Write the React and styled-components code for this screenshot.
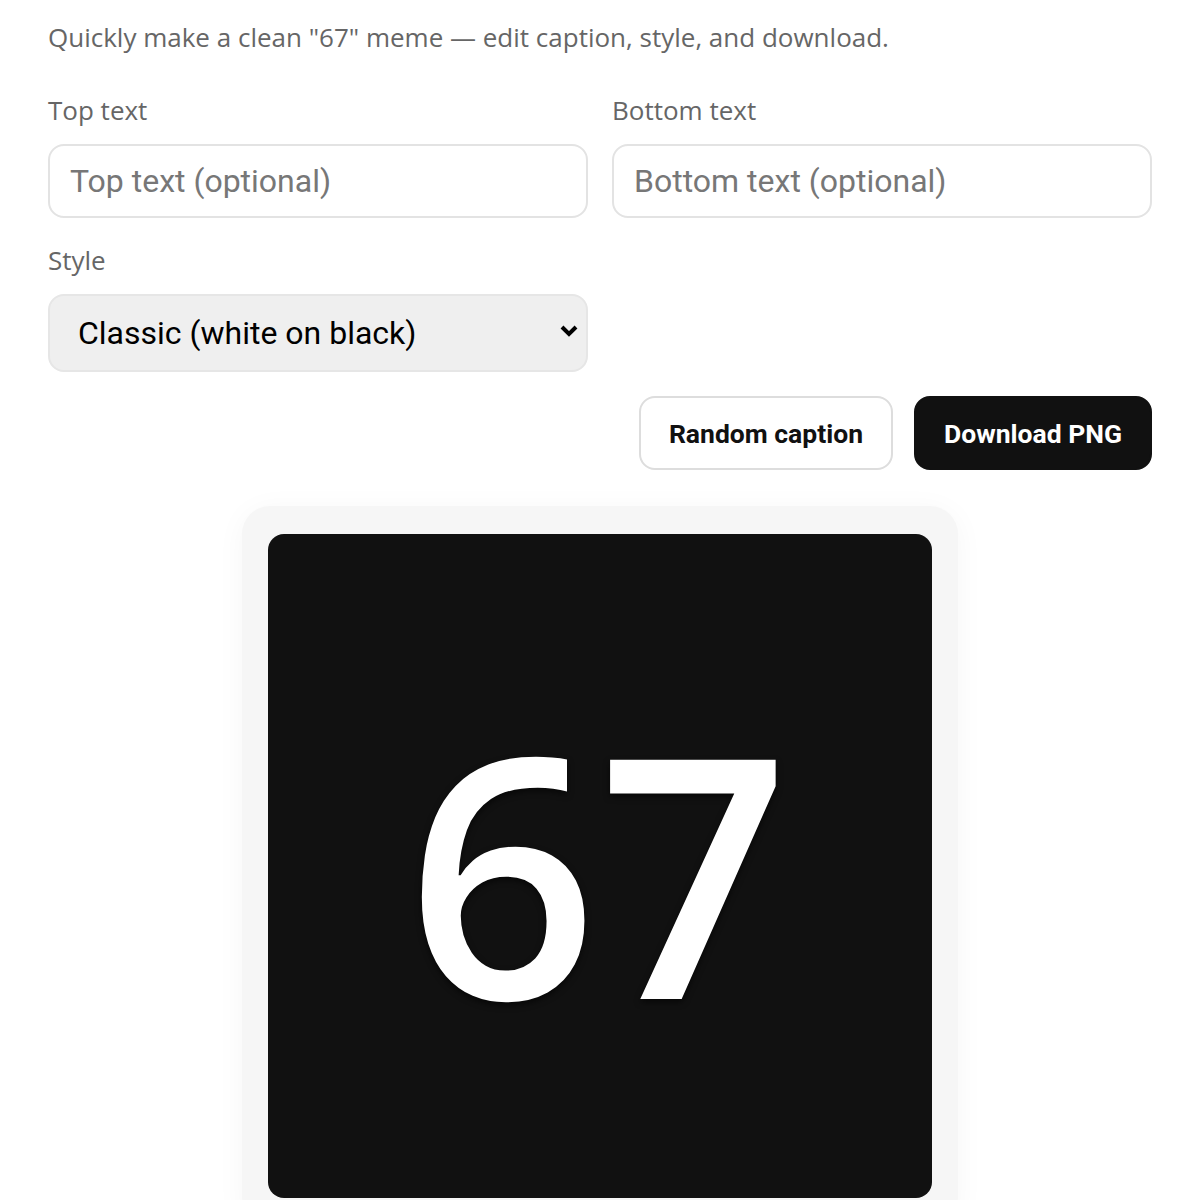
import React, { useState } from 'react';
import styled, { createGlobalStyle } from 'styled-components';

const GlobalStyle = createGlobalStyle`
    html, body {
        margin: 0;
        padding: 0;
        background: #ffffff;
    }
    * {
        box-sizing: border-box;
    }
`;

const Page = styled.div`
    padding: 20px 48px 0 48px;
    font-family: "Open Sans", "Noto Sans", sans-serif;
`;

const Intro = styled.p`
    margin: 0 0 40px 0;
    font-size: 26px;
    line-height: 34px;
    color: #666666;
`;

const FieldGrid = styled.div`
    display: grid;
    grid-template-columns: 1fr 1fr;
    column-gap: 24px;
    row-gap: 26px;
`;

const Field = styled.label`
    display: flex;
    flex-direction: column;
    gap: 18px;
`;

const FieldLabel = styled.span`
    font-size: 26px;
    line-height: 32px;
    color: #666666;
`;

const TextInput = styled.input`
    height: 74px;
    width: 100%;
    border: 2px solid #e3e3e3;
    border-radius: 16px;
    padding: 0 20px;
    font-family: Roboto, "Liberation Sans", sans-serif;
    font-size: 32px;
    color: #111;
    background: #fff;
    outline: none;

    &::placeholder {
        color: #777777;
    }
`;

const SelectWrap = styled.div`
    position: relative;
`;

const StyleSelect = styled.select`
    appearance: none;
    height: 78px;
    width: 100%;
    border: 2px solid #e6e6e6;
    border-radius: 16px;
    padding: 0 28px;
    font-family: Roboto, "Liberation Sans", sans-serif;
    font-size: 32px;
    color: #000;
    background: #efefef;
    outline: none;
`;

const Chevron = styled.svg`
    position: absolute;
    right: 9px;
    top: 30px;
    pointer-events: none;
`;

const Actions = styled.div`
    display: flex;
    justify-content: flex-end;
    gap: 21px;
    margin-top: 24px;
`;

const Button = styled.button`
    height: 74px;
    padding: 0 28px;
    border-radius: 16px;
    border: 2px solid ${p => (p.$primary ? '#111111' : '#dddddd')};
    background: ${p => (p.$primary ? '#111111' : '#ffffff')};
    color: ${p => (p.$primary ? '#ffffff' : '#111111')};
    font-family: Roboto, "Liberation Sans", sans-serif;
    font-weight: 700;
    font-size: 26.5px;
    cursor: pointer;
`;

const PreviewArea = styled.div`
    display: flex;
    justify-content: center;
    margin-top: 36px;
`;

const PreviewFrame = styled.div`
    width: 716px;
    padding: 28px 26px;
    background: #f6f6f6;
    border-radius: 28px;
    box-shadow: 0 4px 30px rgba(0, 0, 0, 0.04);
`;

const MemeCanvas = styled.div`
    width: 664px;
    height: 664px;
    border-radius: 16px;
    background: ${p => (p.$dark ? '#111111' : '#ffffff')};
    color: ${p => (p.$dark ? '#ffffff' : '#111111')};
    display: flex;
    align-items: center;
    justify-content: center;
`;

const BigNumber = styled.span`
    font-family: "Open Sans", "Noto Sans", sans-serif;
    font-weight: 600;
    font-size: 335px;
    line-height: 1;
    margin-top: 6px;
    margin-left: -4px;
    text-shadow: 0 3px 6px rgba(0, 0, 0, 0.6);
`;

export default function App() {
    const [top, setTop] = useState('');
    const [bottom, setBottom] = useState('');
    const [style, setStyle] = useState('classic');

    return (
        <Page>
            <GlobalStyle />
            <Intro>Quickly make a clean "67" meme — edit caption, style, and download.</Intro>
            <FieldGrid>
                <Field>
                    <FieldLabel>Top text</FieldLabel>
                    <TextInput
                        placeholder="Top text (optional)"
                        value={top}
                        onChange={e => setTop(e.target.value)}
                    />
                </Field>
                <Field>
                    <FieldLabel>Bottom text</FieldLabel>
                    <TextInput
                        placeholder="Bottom text (optional)"
                        value={bottom}
                        onChange={e => setBottom(e.target.value)}
                    />
                </Field>
                <Field>
                    <FieldLabel>Style</FieldLabel>
                    <SelectWrap>
                        <StyleSelect value={style} onChange={e => setStyle(e.target.value)}>
                            <option value="classic">Classic (white on black)</option>
                            <option value="inverse">Inverse (black on white)</option>
                        </StyleSelect>
                        <Chevron width="20" height="14" viewBox="0 0 20 14">
                            <path d="M3 3 L10 10 L17 3" fill="none" stroke="#000" strokeWidth="4" strokeLinecap="butt" strokeLinejoin="miter" />
                        </Chevron>
                    </SelectWrap>
                </Field>
            </FieldGrid>
            <Actions>
                <Button>Random caption</Button>
                <Button $primary>Download PNG</Button>
            </Actions>
            <PreviewArea>
                <PreviewFrame>
                    <MemeCanvas $dark={style === 'classic'}>
                        <BigNumber>67</BigNumber>
                    </MemeCanvas>
                </PreviewFrame>
            </PreviewArea>
        </Page>
    );
}
